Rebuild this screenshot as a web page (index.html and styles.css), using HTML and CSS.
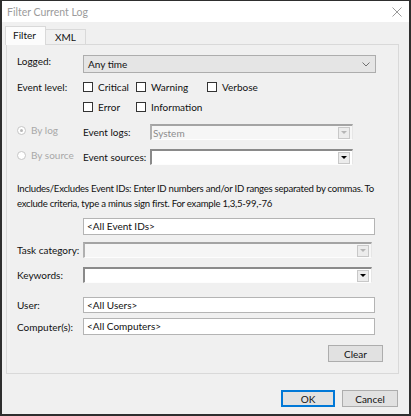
FILE: index.html
```html
<!DOCTYPE html>
<html>
<head>
<meta charset="utf-8">
<link rel="stylesheet" href="styles.css">
</head>
<body>
<div class="window">
  <div class="titlebar">
    <span class="title">Filter Current Log</span>
    <svg class="close" width="10" height="10" viewBox="0 0 10 10"><path d="M0.5 0.5 L9.5 9.5 M9.5 0.5 L0.5 9.5" stroke="#9a9a9a" stroke-width="1" fill="none"/></svg>
  </div>
  <div class="tabs">
    <div class="tab active">Filter</div>
    <div class="tab">XML</div>
  </div>
  <div class="panel">
    <div class="row r-logged">
      <div class="label">Logged:</div>
      <div class="combo10">
        <span>Any time</span>
        <svg width="8" height="5" viewBox="0 0 8 5"><path d="M0.5 0.5 L4 4 L7.5 0.5" stroke="#707070" fill="none"/></svg>
      </div>
    </div>
    <div class="row r-lv1">
      <div class="label">Event level:</div>
      <label class="chk c1"><span class="box"></span>Critical</label>
      <label class="chk c2"><span class="box"></span>Warning</label>
      <label class="chk c3"><span class="box"></span>Verbose</label>
    </div>
    <div class="row r-lv2">
      <div class="label"></div>
      <label class="chk c1"><span class="box"></span>Error</label>
      <label class="chk c2"><span class="box"></span>Information</label>
    </div>
    <div class="row r-bylog">
      <div class="radio"><span class="dot on"></span>By log</div>
      <div class="label2">Event logs:</div>
      <div class="combo disabled w203">
        <span class="val">System</span>
        <span class="arrow"><svg width="6" height="3" viewBox="0 0 6 3"><path d="M0 0 H6 L3 3 Z" fill="#b5b5b5"/></svg></span>
      </div>
    </div>
    <div class="row r-bysrc">
      <div class="radio"><span class="dot"></span>By source</div>
      <div class="label2">Event sources:</div>
      <div class="combo w203">
        <span class="val"></span>
        <span class="arrow"><svg width="6" height="3" viewBox="0 0 6 3"><path d="M0 0 H6 L3 3 Z" fill="#000"/></svg></span>
      </div>
    </div>
    <p class="info">Includes/Excludes Event IDs: Enter ID numbers and/or ID ranges separated by commas. To<br>exclude criteria, type a minus sign first. For example 1,3,5-99,-76</p>
    <div class="row r-ids">
      <div class="label"></div>
      <div class="text">&lt;All Event IDs&gt;</div>
    </div>
    <div class="row r-task">
      <div class="label">Task category:</div>
      <div class="combo disabled wfull">
        <span class="val"></span>
        <span class="arrow"><svg width="6" height="3" viewBox="0 0 6 3"><path d="M0 0 H6 L3 3 Z" fill="#b5b5b5"/></svg></span>
      </div>
    </div>
    <div class="row r-kw">
      <div class="label">Keywords:</div>
      <div class="combo wfull">
        <span class="val"></span>
        <span class="arrow"><svg width="6" height="3" viewBox="0 0 6 3"><path d="M0 0 H6 L3 3 Z" fill="#000"/></svg></span>
      </div>
    </div>
    <div class="row r-user">
      <div class="label">User:</div>
      <div class="text">&lt;All Users&gt;</div>
    </div>
    <div class="row r-comp">
      <div class="label">Computer(s):</div>
      <div class="text">&lt;All Computers&gt;</div>
    </div>
    <div class="row r-clear">
      <div class="btn clear">Clear</div>
    </div>
  </div>
  <div class="footer">
    <div class="btn ok">OK</div>
    <div class="btn cancel">Cancel</div>
  </div>
</div>
</body>
</html>
```
FILE: styles.css
```css
* { box-sizing: border-box; }
html, body { margin: 0; padding: 0; }
body {
  font-family: Lato, "Noto Sans", sans-serif;
  font-size: 10px;
  color: #111;
  background: #fff;
  white-space: nowrap;
}
.window {
  width: 411px;
  height: 416px;
  background: #f0f0f0;
  border: 2px solid #2e2e2e;
  border-top-width: 1px;
  display: flex;
  flex-direction: column;
}
.titlebar {
  height: 21px;
  background: #fff;
  display: flex;
  align-items: center;
  justify-content: space-between;
  padding: 0 4px 0 5px;
}
.title { color: #9b9b9b; font-size: 10.5px; }
.close { margin-right: 3px; }
.tabs {
  display: flex;
  align-items: flex-end;
  height: 22px;
  padding-left: 3px;
}
.tab {
  height: 15px;
  padding: 0 9px 0 9px;
  border: 1px solid #d9d9d9;
  border-bottom: none;
  background: #f0f0f0;
  line-height: 14px;
}
.tab.active {
  background: #fcfcfc;
  line-height: 17px;
  padding: 0 9px 0 7px;
  position: relative;
  z-index: 1;
  margin-bottom: -1px;
  height: 19px;
}
.tab + .tab { border-left: none; }
.panel {
  margin-left: 4px;
  width: 393px;
  height: 330px;
  border: 1px solid #d9d9d9;
  background: #f0f0f0;
  display: flex;
  flex-direction: column;
  padding-left: 10px;
}
.row { display: flex; align-items: center; }
.label { width: 66px; flex: none; }
.r-logged { margin-top: 10px; height: 18px; }
.r-logged .label { align-self: flex-start; }
.combo10 {
  width: 293px;
  height: 18px;
  background: #e5e5e5;
  border: 1px solid #adadad;
  display: flex;
  align-items: center;
  justify-content: space-between;
  padding: 0 5px 0 4px;
}
.r-lv1 { margin-top: 7px; height: 14px; }
.r-lv2 { margin-top: 6px; height: 14px; }
.chk { display: flex; align-items: center; flex: none; }
.chk .box {
  width: 10px; height: 10px;
  border: 1px solid #333;
  background: #fff;
  margin-right: 5px;
}
.c1 { width: 53px; }
.c2 { width: 71px; }
.r-bylog { margin-top: 10px; height: 16px; }
.r-bysrc { margin-top: 9px; height: 16px; }
.radio {
  width: 66px; flex: none;
  color: #a8a8a8;
  display: flex; align-items: center;
  position: relative; top: -2px;
}
.dot {
  width: 9px; height: 9px;
  border-radius: 50%;
  border: 1px solid #c6c6c6;
  background: #fff;
  margin-right: 5px;
  display: flex; align-items: center; justify-content: center;
}
.dot.on::after {
  content: "";
  width: 3px; height: 3px; border-radius: 50%;
  background: #b8b8b8;
}
.label2 { width: 67px; flex: none; }
.combo {
  height: 16px;
  background: #fff;
  border-top: 2px solid #8a8a8a;
  border-left: 2px solid #8a8a8a;
  border-right: 1px solid #e6e6e6;
  border-bottom: 1px solid #fdfdfd;
  display: flex;
  align-items: center;
  justify-content: space-between;
  padding: 0 2px 0 1px;
}
.combo.disabled { background: #f6f6f6; border-top-color: #a4a4a4; border-left-color: #b0b0b0; }
.combo .val { color: #8c8c8c; }
.combo .arrow {
  width: 12px; height: 12px;
  border: 1px solid #c8c8c8;
  background: #ececec;
  display: flex; align-items: center; justify-content: center;
}
.w203 { width: 203px; }
.wfull { width: 289px; }
.info {
  margin: 16px 0 0 0;
  line-height: 15px;
  height: 30px;
  font-size: 9.6px;
  letter-spacing: -0.25px;
}
.r-ids { margin-top: 7px; height: 17px; }
.text {
  width: 292px;
  height: 17px;
  background: #fff;
  border: 1px solid #b4b4b4;
  padding-left: 3px;
  line-height: 15px;
}
.r-task { margin-top: 7px; height: 16px; }
.r-kw { margin-top: 9px; height: 16px; }
.r-user { margin-top: 14px; height: 16px; }
.r-user .text { height: 16px; line-height: 14px; }
.r-comp { margin-top: 5px; height: 17px; }
.r-clear { margin-top: 10px; justify-content: flex-end; padding-right: 15px; }
.btn {
  height: 17px;
  background: #e1e1e1;
  border: 1px solid #adadad;
  display: flex; align-items: center; justify-content: center;
}
.clear { width: 55px; }
.footer {
  display: flex;
  justify-content: flex-end;
  padding-top: 16px;
  padding-right: 11px;
  gap: 7px;
}
.ok { width: 54px; border: 2px solid #0078d7; }
.cancel { width: 56px; }
```
